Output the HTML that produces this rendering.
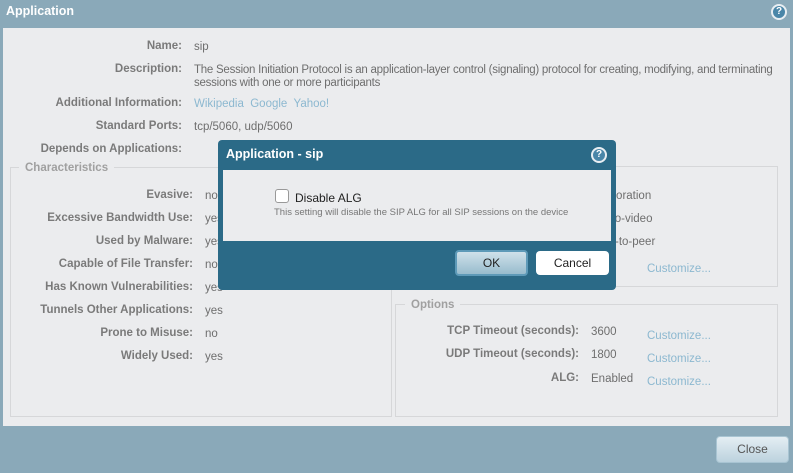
<!DOCTYPE html>
<html><head><meta charset="utf-8"><style>
*{box-sizing:border-box;margin:0;padding:0}
body{width:793px;height:473px;background:#8aa9b9;font-family:"Liberation Sans",sans-serif;font-size:11.5px;position:relative;overflow:hidden}
.abs{position:absolute}
.title{left:6px;top:4px;color:#fff;font-weight:bold;font-size:12.5px}
.help{width:16px;height:16px;border-radius:50%;background:#4a86a8;border:2px solid #e8eef2;color:#fff;font-size:10px;font-weight:bold;text-align:center;line-height:12px}
.panel{left:3px;top:28px;width:787px;height:398px;background:#ebecee}
.lbl,.val,.lnk,.leg{margin-top:2px}
.lbl{font-weight:bold;color:#7a7a7a;text-align:right;white-space:nowrap}
.val{color:#6e6e6e;white-space:nowrap}
.lnk{color:#8cb8d0;white-space:nowrap}
.box{border:1px solid #d6d7d9}
.leg{color:#a0a0a0;font-weight:bold;background:#ebecee;padding:0 6px}
.btn{border-radius:4px;text-align:center;font-size:12px;color:#222}
</style></head><body>
<div class="abs title">Application</div>
<div class="abs help" style="left:771px;top:4px">?</div>
<div class="abs panel"></div>

<div class="abs lbl" style="right:611px;top:38px">Name:</div><div class="abs val" style="left:194px;top:39px">sip</div>
<div class="abs lbl" style="right:611px;top:61px">Description:</div>
<div class="abs val" style="left:194px;top:62px;width:598px;line-height:13px;white-space:normal;letter-spacing:-0.25px">The Session Initiation Protocol is an application-layer control (signaling) protocol for creating, modifying, and terminating sessions with one or more participants</div>
<div class="abs lbl" style="right:611px;top:95px">Additional Information:</div>
<div class="abs lnk" style="left:194px;top:96px">Wikipedia&nbsp; Google&nbsp; Yahoo!</div>
<div class="abs lbl" style="right:611px;top:118px">Standard Ports:</div><div class="abs val" style="left:194px;top:119px">tcp/5060, udp/5060</div>
<div class="abs lbl" style="right:611px;top:141px">Depends on Applications:</div>

<div class="abs box" style="left:10px;top:167px;width:382px;height:250px"></div>
<div class="abs leg" style="left:19px;top:160px">Characteristics</div>
<div class="abs lbl" style="right:600px;top:187px">Evasive:</div><div class="abs val" style="left:205px;top:188px">no</div>
<div class="abs lbl" style="right:600px;top:210px">Excessive Bandwidth Use:</div><div class="abs val" style="left:205px;top:211px">yes</div>
<div class="abs lbl" style="right:600px;top:233px">Used by Malware:</div><div class="abs val" style="left:205px;top:234px">yes</div>
<div class="abs lbl" style="right:600px;top:256px">Capable of File Transfer:</div><div class="abs val" style="left:205px;top:257px">no</div>
<div class="abs lbl" style="right:600px;top:279px">Has Known Vulnerabilities:</div><div class="abs val" style="left:205px;top:280px">yes</div>
<div class="abs lbl" style="right:600px;top:302px">Tunnels Other Applications:</div><div class="abs val" style="left:205px;top:303px">yes</div>
<div class="abs lbl" style="right:600px;top:325px">Prone to Misuse:</div><div class="abs val" style="left:205px;top:326px">no</div>
<div class="abs lbl" style="right:600px;top:348px">Widely Used:</div><div class="abs val" style="left:205px;top:349px">yes</div>

<div class="abs box" style="left:395px;top:166px;width:383px;height:121px"></div>
<div class="abs val" style="left:586px;top:188px">collaboration</div>
<div class="abs val" style="left:593px;top:211px">audio-video</div>
<div class="abs val" style="left:592px;top:234px">peer-to-peer</div>
<div class="abs lnk" style="left:647px;top:261px">Customize...</div>

<div class="abs box" style="left:395px;top:304px;width:383px;height:113px"></div>
<div class="abs leg" style="left:405px;top:297px">Options</div>
<div class="abs lbl" style="right:214px;top:323px">TCP Timeout (seconds):</div><div class="abs val" style="left:591px;top:324px">3600</div><div class="abs lnk" style="left:647px;top:328px">Customize...</div>
<div class="abs lbl" style="right:214px;top:346px">UDP Timeout (seconds):</div><div class="abs val" style="left:591px;top:347px">1800</div><div class="abs lnk" style="left:647px;top:351px">Customize...</div>
<div class="abs lbl" style="right:214px;top:370px">ALG:</div><div class="abs val" style="left:591px;top:371px">Enabled</div><div class="abs lnk" style="left:647px;top:374px">Customize...</div>

<div class="abs btn" style="left:716px;top:436px;width:73px;height:27px;background:linear-gradient(#e4eef3,#bcd2de);border:1px solid #a8c4d2;line-height:25px;color:#555">Close</div>

<div class="abs" style="left:218px;top:140px;width:398px;height:150px;background:#2b6a87;border-radius:4px"></div>
<div class="abs" style="left:226px;top:147px;color:#fff;font-weight:bold;font-size:12.5px">Application - sip</div>
<div class="abs help" style="left:591px;top:147px">?</div>
<div class="abs" style="left:223px;top:170px;width:388px;height:71px;background:#ebecee"></div>
<div class="abs" style="left:275px;top:189px;width:14px;height:14px;background:#fff;border:1px solid #999;border-radius:3px"></div>
<div class="abs" style="left:295px;top:191px;color:#222;font-size:12px">Disable ALG</div>
<div class="abs" style="left:274px;top:207px;color:#777;font-size:9.5px">This setting will disable the SIP ALG for all SIP sessions on the device</div>
<div class="abs btn" style="left:455px;top:250px;width:73px;height:26px;background:linear-gradient(#cfe1ea,#98bccd);border:2px solid #5e9ab8;line-height:22px">OK</div>
<div class="abs btn" style="left:536px;top:251px;width:73px;height:24px;background:#fff;line-height:24px">Cancel</div>
</body></html>
